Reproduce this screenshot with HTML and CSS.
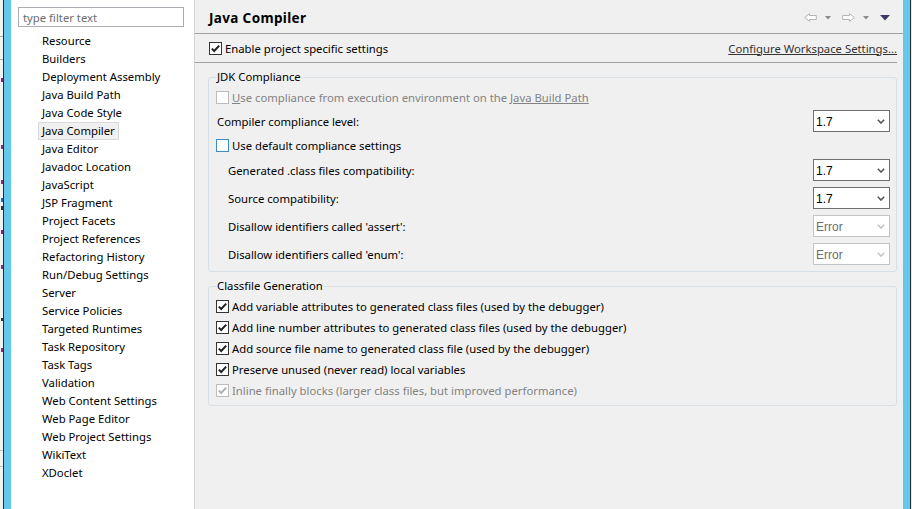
FILE: index.html
```html
<!DOCTYPE html>
<html>
<head>
<meta charset="utf-8">
<title>Java Compiler</title>
<link rel="stylesheet" href="styles.css">
</head>
<body>
<div class="screen">
  <div class="edge-left">
    <div class="behind"></div>
    <div class="frame-line"></div>
    <div class="frame-blue"></div>
  </div>
  <aside class="tree">
    <input class="filter" type="text" placeholder="type filter text">
    <ul class="items">
      <li><span>Resource</span></li>
      <li><span>Builders</span></li>
      <li><span>Deployment Assembly</span></li>
      <li><span>Java Build Path</span></li>
      <li><span>Java Code Style</span></li>
      <li class="selected"><span>Java Compiler</span></li>
      <li><span>Java Editor</span></li>
      <li><span>Javadoc Location</span></li>
      <li><span>JavaScript</span></li>
      <li><span>JSP Fragment</span></li>
      <li><span>Project Facets</span></li>
      <li><span>Project References</span></li>
      <li><span>Refactoring History</span></li>
      <li><span>Run/Debug Settings</span></li>
      <li><span>Server</span></li>
      <li><span>Service Policies</span></li>
      <li><span>Targeted Runtimes</span></li>
      <li><span>Task Repository</span></li>
      <li><span>Task Tags</span></li>
      <li><span>Validation</span></li>
      <li><span>Web Content Settings</span></li>
      <li><span>Web Page Editor</span></li>
      <li><span>Web Project Settings</span></li>
      <li><span>WikiText</span></li>
      <li><span>XDoclet</span></li>
    </ul>
  </aside>
  <main class="page">
    <header class="page-head">
      <h1 class="title">Java Compiler</h1>
      <div class="nav">
        <svg class="nav-arrow" width="13" height="9" viewBox="0 0 13 9"><path d="M0.7 4.5 L5.5 0.7 L5.5 2.5 L12.3 2.5 L12.3 6.5 L5.5 6.5 L5.5 8.3 Z" fill="#fff" stroke="#b4b4b4" stroke-width="1"/></svg>
        <svg class="nav-drop" width="6" height="4" viewBox="0 0 6 4"><path d="M0 0 H6 L3 3.5 Z" fill="#8a8a8a"/></svg>
        <svg class="nav-arrow fwd" width="13" height="9" viewBox="0 0 13 9"><path d="M12.3 4.5 L7.5 0.7 L7.5 2.5 L0.7 2.5 L0.7 6.5 L7.5 6.5 L7.5 8.3 Z" fill="#fff" stroke="#b4b4b4" stroke-width="1"/></svg>
        <svg class="nav-drop" width="6" height="4" viewBox="0 0 6 4"><path d="M0 0 H6 L3 3.5 Z" fill="#8a8a8a"/></svg>
        <svg class="nav-menu" width="10" height="6" viewBox="0 0 10 6"><path d="M0 0 H10 L5 5.5 Z" fill="#3a3a62"/></svg>
      </div>
    </header>

    <div class="enable-row">
      <label class="check">
        <span class="box"><svg width="11" height="11" viewBox="0 0 11 11"><path d="M1.8 5.6 L4.2 8 L9.2 2.6" fill="none" stroke="#222" stroke-width="2"/></svg></span>
        <span>Enable project specific settings</span>
      </label>
      <a class="ws-link">Configure Workspace Settings...</a>
    </div>

    <section class="group jdk">
      <div class="group-title">JDK Compliance</div>
      <div class="row r-env">
        <label class="check disabled">
          <span class="box"></span>
          <span><u>U</u>se compliance from execution environment on the <u>Java Build Path</u></span>
        </label>
      </div>
      <div class="row r-combo r-level">
        <span class="lbl">Compiler compliance level:</span>
        <div class="combo"><span>1.7</span><svg width="8" height="5" viewBox="0 0 8 5"><path d="M0.8 0.8 L4 4 L7.2 0.8" fill="none" stroke="#555" stroke-width="1.6"/></svg></div>
      </div>
      <div class="row r-default">
        <label class="check">
          <span class="box focus"></span>
          <span>Use default compliance settings</span>
        </label>
      </div>
      <div class="row r-combo r-first indent">
        <span class="lbl">Generated .class files compatibility:</span>
        <div class="combo"><span>1.7</span><svg width="8" height="5" viewBox="0 0 8 5"><path d="M0.8 0.8 L4 4 L7.2 0.8" fill="none" stroke="#555" stroke-width="1.6"/></svg></div>
      </div>
      <div class="row r-combo indent">
        <span class="lbl">Source compatibility:</span>
        <div class="combo"><span>1.7</span><svg width="8" height="5" viewBox="0 0 8 5"><path d="M0.8 0.8 L4 4 L7.2 0.8" fill="none" stroke="#555" stroke-width="1.6"/></svg></div>
      </div>
      <div class="row r-combo indent">
        <span class="lbl">Disallow identifiers called 'assert':</span>
        <div class="combo off"><span>Error</span><svg width="8" height="5" viewBox="0 0 8 5"><path d="M0.8 0.8 L4 4 L7.2 0.8" fill="none" stroke="#c4c4c4" stroke-width="1.6"/></svg></div>
      </div>
      <div class="row r-combo indent">
        <span class="lbl">Disallow identifiers called 'enum':</span>
        <div class="combo off"><span>Error</span><svg width="8" height="5" viewBox="0 0 8 5"><path d="M0.8 0.8 L4 4 L7.2 0.8" fill="none" stroke="#c4c4c4" stroke-width="1.6"/></svg></div>
      </div>
    </section>

    <section class="group classfile">
      <div class="group-title">Classfile Generation</div>
      <div class="cf-row first">
        <label class="check">
          <span class="box"><svg width="11" height="11" viewBox="0 0 11 11"><path d="M1.8 5.6 L4.2 8 L9.2 2.6" fill="none" stroke="#222" stroke-width="2"/></svg></span>
          <span>Add variable attributes to generated class files (used by the debugger)</span>
        </label>
      </div>
      <div class="cf-row">
        <label class="check">
          <span class="box"><svg width="11" height="11" viewBox="0 0 11 11"><path d="M1.8 5.6 L4.2 8 L9.2 2.6" fill="none" stroke="#222" stroke-width="2"/></svg></span>
          <span>Add line number attributes to generated class files (used by the debugger)</span>
        </label>
      </div>
      <div class="cf-row">
        <label class="check">
          <span class="box"><svg width="11" height="11" viewBox="0 0 11 11"><path d="M1.8 5.6 L4.2 8 L9.2 2.6" fill="none" stroke="#222" stroke-width="2"/></svg></span>
          <span>Add source file name to generated class file (used by the debugger)</span>
        </label>
      </div>
      <div class="cf-row">
        <label class="check">
          <span class="box"><svg width="11" height="11" viewBox="0 0 11 11"><path d="M1.8 5.6 L4.2 8 L9.2 2.6" fill="none" stroke="#222" stroke-width="2"/></svg></span>
          <span>Preserve unused (never read) local variables</span>
        </label>
      </div>
      <div class="cf-row">
        <label class="check disabled">
          <span class="box"><svg width="11" height="11" viewBox="0 0 11 11"><path d="M1.8 5.6 L4.2 8 L9.2 2.6" fill="none" stroke="#b0b0b0" stroke-width="2"/></svg></span>
          <span>Inline finally blocks (larger class files, but improved performance)</span>
        </label>
      </div>
    </section>
  </main>
  <div class="edge-right">
    <div class="frame-blue"></div>
    <div class="frame-line"></div>
    <div class="behind-r"></div>
  </div>
</div>
</body>
</html>
```
FILE: styles.css
```css
* { box-sizing: border-box; }

body {
  margin: 0;
  width: 912px;
  height: 509px;
  overflow: hidden;
  font-family: "Noto Sans", "Open Sans", sans-serif;
  font-size: 11.3px;
  color: #000;
  background: #f0f0f0;
}

.screen {
  display: flex;
  height: 509px;
}

/* window frame edges */
.edge-left, .edge-right {
  display: flex;
  height: 100%;
}
.behind {
  width: 3px;
  background:
    linear-gradient(#a8a8a8, #a8a8a8) 0 36px / 3px 1px no-repeat,
    linear-gradient(#a8a8a8, #a8a8a8) 0 59px / 3px 1px no-repeat,
    linear-gradient(#8a2a72, #8a2a72) 1px 78px / 2px 4px no-repeat,
    linear-gradient(#8a2a72, #8a2a72) 1px 145px / 2px 4px no-repeat,
    linear-gradient(#8a2a72, #8a2a72) 1px 180px / 2px 4px no-repeat,
    linear-gradient(#2a6aa8, #2a6aa8) 1px 198px / 2px 4px no-repeat,
    linear-gradient(#333, #333) 1px 206px / 2px 4px no-repeat,
    linear-gradient(#8a2a72, #8a2a72) 1px 230px / 2px 4px no-repeat,
    linear-gradient(#8a2a72, #8a2a72) 1px 265px / 2px 4px no-repeat,
    linear-gradient(#333, #333) 1px 318px / 2px 3px no-repeat,
    linear-gradient(#8a2a72, #8a2a72) 1px 348px / 2px 4px no-repeat,
    linear-gradient(#c0c0c0, #c0c0c0) 0 450px / 3px 1px no-repeat,
    linear-gradient(#c0c0c0, #c0c0c0) 0 466px / 3px 1px no-repeat,
    #f2f2f2;
}
.behind-r {
  width: 1px;
  background: #e6e6e6;
}
.frame-line {
  width: 1px;
  background: #2b2b2b;
}
.frame-blue {
  width: 7px;
  background: #63c9ec;
}

/* left tree */
.tree {
  width: 184px;
  background: #fff;
  border-right: 1px solid #d4d4d4;
  padding: 7px 10px 0 7px;
}
.filter {
  display: block;
  width: 166px;
  height: 20px;
  border: 1px solid #abadb3;
  padding: 0 4px;
  font: inherit;
  outline: none;
  background: #fff;
}
.filter::placeholder {
  color: #6d6d6d;
}
.items {
  list-style: none;
  margin: 5px 0 0 0;
  padding: 0 0 0 20px;
}
.items li {
  height: 18px;
}
.items li span {
  display: inline-block;
  height: 18px;
  line-height: 16px;
  padding: 0 3px;
  border: 1px solid transparent;
  white-space: nowrap;
}
.items li.selected span {
  background: #f0f0f0;
  border-color: #dadada;
}

/* main page */
.page {
  width: 708px;
  background: #f0f0f0;
  display: flex;
  flex-direction: column;
}
.page-head {
  height: 34px;
  border-bottom: 1px solid #a0a0a0;
  display: flex;
  align-items: center;
  padding: 2px 13px 0 14px;
}
.title {
  margin: 0;
  font-size: 13.5px;
  font-weight: bold;
  letter-spacing: 0.35px;
}
.nav {
  margin-left: auto;
  display: flex;
  align-items: center;
}
.nav-arrow { margin-right: 8px; }
.nav-drop { margin-right: 11px; }

.enable-row {
  height: 29px;
  margin-right: 6px;
  border-bottom: 1px solid #a0a0a0;
  padding-left: 14px;
  display: flex;
  align-items: center;
}
.ws-link {
  margin-left: auto;
  color: #333;
  text-decoration: underline;
}

.check {
  display: flex;
  align-items: center;
  gap: 3px;
  white-space: nowrap;
}
.box {
  width: 13px;
  height: 13px;
  border: 1px solid #333;
  background: #fff;
  display: flex;
  align-items: center;
  justify-content: center;
  flex: none;
}
.box.focus { border-color: #3c8ccc; }
.check.disabled { color: #838383; }
.check.disabled .box { border-color: #bcbcbc; }

/* group boxes */
.group {
  margin: 14px 6px 0 13px;
  border: 1px solid #d5dfe5;
  border-radius: 3px;
  padding: 0 6px 0 7px;
}
.group-title {
  margin: -9px 0 0 0;
  height: 16px;
  line-height: 16px;
  width: fit-content;
  padding: 0 1px;
  background: #f0f0f0;
}
.jdk { padding-bottom: 6px; }
.row {
  display: flex;
  align-items: center;
  padding-left: 1px;
}
.r-env { height: 20px; margin-top: 2px; padding-left: 0; }
.r-default { height: 22px; margin-top: 2px; padding-left: 0; }
.r-combo { height: 22px; margin-top: 6px; }
.r-level, .r-first { margin-top: 3px; }
.indent { padding-left: 12px; }
.combo {
  margin-left: auto;
  width: 77px;
  height: 22px;
  background: #fff;
  border: 1px solid #707070;
  display: flex;
  align-items: center;
  padding: 1px 4px 0 2px;
  font-family: "Liberation Sans", Arial, sans-serif;
  font-size: 12px;
}
.combo svg { margin-left: auto; }
.combo.off {
  border-color: #c4c4c4;
  color: #6d6d6d;
}

.classfile { padding-bottom: 4px; }
.cf-row {
  height: 21px;
  display: flex;
  align-items: center;
}
.cf-row.first { margin-top: 2px; }
```
